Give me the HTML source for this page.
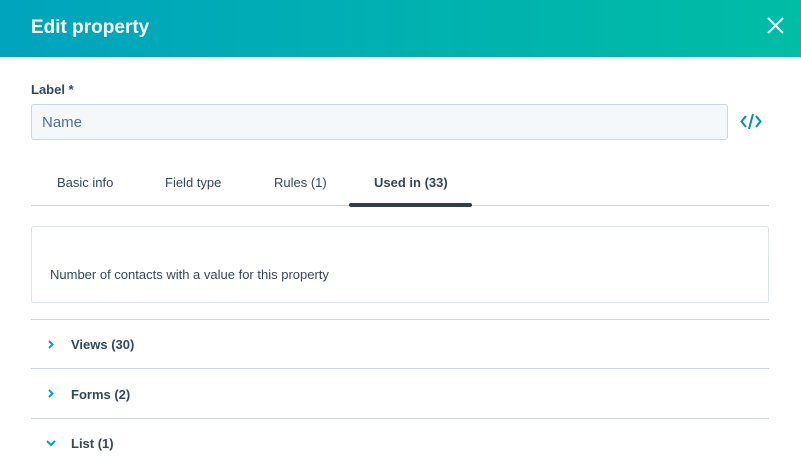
<!DOCTYPE html>
<html><head><style>
body{margin:0;width:801px;height:460px;overflow:hidden;background:#fff;font-family:"Liberation Sans",sans-serif;color:#33475b;position:relative}
.hdr{position:absolute;left:0;top:0;width:801px;height:57px;background:linear-gradient(90deg,#00a4bd,#00bda5)}
.hdr h1{position:absolute;left:31px;top:17px;margin:0;font-size:19px;font-weight:bold;color:#fff}
.ab{position:absolute}
.lbl{left:31px;top:82px;font-size:13px;font-weight:bold}
.inp{left:31px;top:104px;background:#f5f8fa;border:1px solid #cbd6e2;border-radius:3px;font-size:15px;line-height:36px;padding-left:10px;box-sizing:border-box;width:697px;height:36px;color:#516f90}
.tab{top:175px;font-size:13px;color:#33475b}
.line{left:31px;width:738px;height:1px;background:#cbd6e2}
.box{left:31px;top:226px;width:738px;height:77px;border:1px solid #dfe3eb;border-radius:3px;box-sizing:border-box}
.row{left:71px;font-size:13px;font-weight:bold}
</style></head><body>
<div class="hdr"><h1>Edit property</h1>
<svg class="ab" style="left:767px;top:17px" width="17" height="17" viewBox="0 0 17 17"><path d="M1 1L16 16M16 1L1 16" stroke="#fff" stroke-width="2"/></svg></div>
<div class="ab lbl">Label *</div>
<div class="ab inp">Name</div>
<svg class="ab" style="left:740px;top:113px" width="22" height="17" viewBox="0 0 22 17"><path d="M6 3L1.5 8.5L6 14M16 3L20.5 8.5L16 14M13 1L9 16" stroke="#0091ae" stroke-width="2" fill="none"/></svg>
<div class="ab tab" style="left:57px">Basic info</div>
<div class="ab tab" style="left:165px">Field type</div>
<div class="ab tab" style="left:274px">Rules (1)</div>
<div class="ab tab" style="left:374px;font-weight:bold">Used in (33)</div>
<div class="ab line" style="top:205px"></div>
<div class="ab" style="left:349px;top:203px;width:123px;height:4px;border-radius:2px;background:#2d3e50"></div>
<div class="ab box"></div>
<div class="ab" style="left:50px;top:267px;font-size:13px">Number of contacts with a value for this property</div>
<div class="ab line" style="top:319px"></div>
<svg class="ab" style="left:48px;top:340px" width="6" height="9" viewBox="0 0 6 9"><path d="M1 1L4.5 4.5L1 8" stroke="#00a4bd" stroke-width="2" fill="none"/></svg>
<div class="ab row" style="top:337px">Views (30)</div>
<div class="ab line" style="top:368px"></div>
<svg class="ab" style="left:48px;top:389px" width="6" height="9" viewBox="0 0 6 9"><path d="M1 1L4.5 4.5L1 8" stroke="#00a4bd" stroke-width="2" fill="none"/></svg>
<div class="ab row" style="top:387px">Forms (2)</div>
<div class="ab line" style="top:418px"></div>
<svg class="ab" style="left:46px;top:440px" width="10" height="7" viewBox="0 0 10 7"><path d="M1 1L5 5L9 1" stroke="#00a4bd" stroke-width="2" fill="none"/></svg>
<div class="ab row" style="top:436px">List (1)</div>
</body></html>
